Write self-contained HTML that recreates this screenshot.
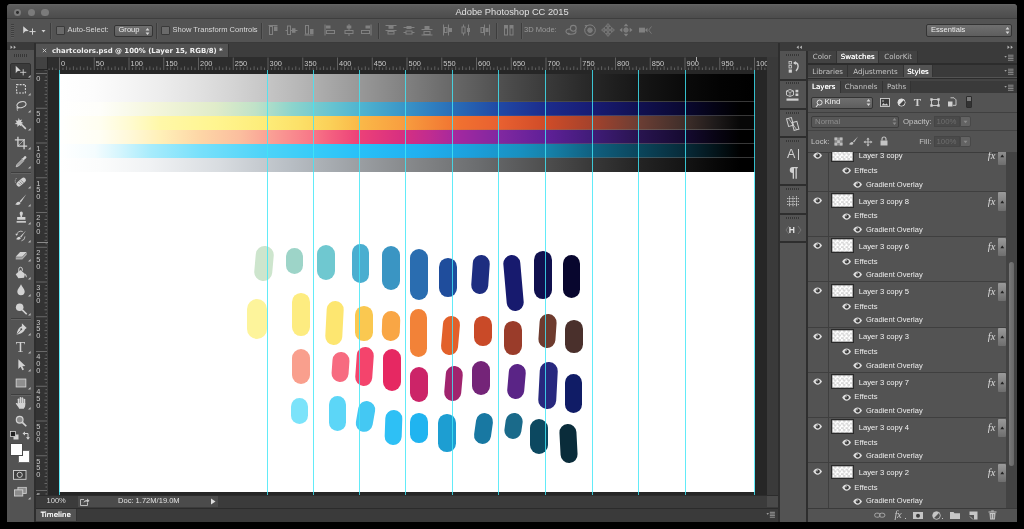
<!DOCTYPE html><html><head><meta charset="utf-8"><title>Adobe Photoshop CC 2015</title><style>
*{box-sizing:border-box;margin:0;padding:0}
html,body{width:1024px;height:529px;overflow:hidden;background:#000}
body{position:relative;filter:blur(.55px);font-family:"Liberation Sans",sans-serif;font-size:7.55px;color:#d8d8d8;line-height:1}
.a{position:absolute}
.t{position:absolute;white-space:nowrap;line-height:10px;height:10px}
.tab{position:absolute;font-family:"DejaVu Sans",sans-serif;font-size:7.1px;white-space:nowrap;text-align:center;color:#c4c4c4;background:#424242;line-height:11.5px;border-right:1px solid #333}
.tab.on{background:#535353;color:#fff;text-shadow:0 0 .5px #fff}
.sep{position:absolute;width:1px;background:#3d3d3d;box-shadow:1px 0 0 #5b5b5b}
.cb{position:absolute;width:9px;height:9px;background:#6a6a6a;border:1px solid #3a3a3a;border-radius:1px}
.dd{position:absolute;border:1px solid #343434;border-radius:2px;background:linear-gradient(#6f6f6f,#5e5e5e)}
.blob{position:absolute}
.rl{position:absolute;font-size:7.4px;color:#c9c9c9;line-height:8px;white-space:nowrap}
.vl{position:absolute;font-size:7.4px;color:#c9c9c9;line-height:6.75px;width:6px;text-align:center;word-break:break-all}
</style></head><body>
<div class="a" style="left:7.3px;top:4px;width:1009.5px;height:517.8px;background:#535353;border-radius:3.5px 3.5px 0 0"></div>
<div class="a" style="left:7.3px;top:4px;width:1009.5px;height:14.5px;background:linear-gradient(#666 0,#5c5c5c 12%,#4b4b4b 100%);border-radius:3.5px 3.5px 0 0"></div>
<div class="a" style="left:7.3px;top:18.4px;width:1009.5px;height:1px;background:#3e3e3e"></div>
<div class="a" style="left:13.65px;top:8.9px;width:7.2px;height:7.2px;border-radius:50%;background:#7b7b7b"></div>
<div class="a" style="left:27.65px;top:8.9px;width:7.2px;height:7.2px;border-radius:50%;background:#7b7b7b"></div>
<div class="a" style="left:41.4px;top:8.9px;width:7.2px;height:7.2px;border-radius:50%;background:#7b7b7b"></div>
<div class="a" style="left:15.85px;top:11.1px;width:2.8px;height:2.8px;border-radius:50%;background:#2c2c2c"></div>
<div class="t" style="left:412px;top:7px;width:200px;text-align:center;font-size:9.3px;color:#e0e0e0">Adobe Photoshop CC 2015</div>
<div class="a" style="left:7.3px;top:19.4px;width:1009.5px;height:22.6px;background:#535353"></div>
<div class="a" style="left:7.3px;top:42px;width:1009.5px;height:1px;background:#3a3a3a"></div>
<div class="a" style="left:11px;top:24px;width:2.5px;height:14px;background:repeating-linear-gradient(#3e3e3e 0 1px,#5c5c5c 1px 2px)"></div>
<svg class="a" style="left:22px;top:24px;" width="16" height="13" viewBox="0 0 16 13"><path d="M1.200 2.200v7.200l2-2.100 3.600-.3z" fill="#d4d4d4"/><path d="M10.500 4.500v6.200M7.400 7.600h6.200" stroke="#d4d4d4" stroke-width="1" fill="none"/></svg>
<svg class="a" style="left:41px;top:28.5px;" width="5" height="4" viewBox="0 0 5 4"><path d="M0.5 1h4l-2 2.4z" fill="#d0d0d0"/></svg>
<div class="sep" style="left:50px;top:23px;height:16px"></div>
<div class="cb" style="left:55.5px;top:26px"></div>
<div class="t" style="left:67.5px;top:25.1px;">Auto-Select:</div>
<div class="dd" style="left:114px;top:24.5px;width:38.5px;height:12.5px"></div>
<div class="t" style="left:118.5px;top:25.2px;color:#ececec">Group</div>
<svg class="a" style="left:144.5px;top:26.5px;" width="5" height="9" viewBox="0 0 5 9"><path d="M0.6 3.6h3.8l-1.9-2.6zM0.6 5.4h3.8l-1.9 2.6z" fill="#d8d8d8"/></svg>
<div class="sep" style="left:156px;top:23px;height:16px"></div>
<div class="cb" style="left:160.5px;top:26px"></div>
<div class="t" style="left:172.5px;top:25.1px;">Show Transform Controls</div>
<div class="sep" style="left:261px;top:23px;height:16px"></div>
<svg class="a" style="left:266.5px;top:22.9px;" width="14" height="14" viewBox="0 0 14 14"><path d="M1.5 2.5h9" stroke="#818181"/><rect x="2.5" y="3.5" width="3" height="8" fill="none" stroke="#818181"/><rect x="7" y="3.5" width="3.5" height="4.5" fill="#818181"/></svg>
<svg class="a" style="left:284.75px;top:22.9px;" width="14" height="14" viewBox="0 0 14 14"><path d="M0.5 7.5h12" stroke="#818181"/><rect x="2.5" y="3" width="3" height="8.5" fill="#535353" stroke="#818181"/><rect x="7" y="5.2" width="3.5" height="4.6" fill="#818181"/></svg>
<svg class="a" style="left:302.75px;top:22.9px;" width="14" height="14" viewBox="0 0 14 14"><path d="M1.5 12h9" stroke="#818181"/><rect x="2.5" y="2.5" width="3" height="8.5" fill="none" stroke="#818181"/><rect x="7" y="6" width="3.5" height="5" fill="#818181"/></svg>
<svg class="a" style="left:322.75px;top:22.9px;" width="14" height="14" viewBox="0 0 14 14"><path d="M2 1.5v11" stroke="#818181"/><rect x="3" y="2.5" width="4.5" height="3" fill="#818181"/><rect x="3.5" y="7.5" width="8" height="3" fill="none" stroke="#818181"/></svg>
<svg class="a" style="left:341.5px;top:22.9px;" width="14" height="14" viewBox="0 0 14 14"><path d="M7 1v12" stroke="#818181"/><rect x="4.7" y="2.5" width="4.6" height="3" fill="#818181"/><rect x="3" y="7.5" width="8" height="3" fill="#535353" stroke="#818181"/></svg>
<svg class="a" style="left:359px;top:22.9px;" width="14" height="14" viewBox="0 0 14 14"><path d="M12 1.5v11" stroke="#818181"/><rect x="6.5" y="2.5" width="4.5" height="3" fill="#818181"/><rect x="2.5" y="7.5" width="8" height="3" fill="none" stroke="#818181"/></svg>
<div class="sep" style="left:378px;top:23px;height:16px"></div>
<svg class="a" style="left:384px;top:22.9px;" width="14" height="14" viewBox="0 0 14 14"><path d="M1.5 2.5h11M1.5 7.5h11" stroke="#818181"/><rect x="4.5" y="3" width="5" height="2.8" fill="#818181"/><rect x="4" y="8.5" width="6" height="2.5" fill="none" stroke="#818181"/></svg>
<svg class="a" style="left:402px;top:22.9px;" width="14" height="14" viewBox="0 0 14 14"><path d="M1.5 4.5h11M1.5 9.5h11" stroke="#818181"/><rect x="4.5" y="3" width="5" height="3" fill="#818181"/><rect x="4" y="8" width="6" height="3" fill="#535353" stroke="#818181"/></svg>
<svg class="a" style="left:420.25px;top:22.9px;" width="14" height="14" viewBox="0 0 14 14"><path d="M1.5 6.5h11M1.5 12h11" stroke="#818181"/><rect x="4.5" y="3" width="5" height="3" fill="#818181"/><rect x="4" y="8.5" width="6" height="3" fill="none" stroke="#818181"/></svg>
<svg class="a" style="left:441px;top:22.9px;" width="14" height="14" viewBox="0 0 14 14"><path d="M2.5 1.5v11M7.5 1.5v11" stroke="#818181"/><rect x="3.5" y="4.5" width="2.5" height="5" fill="none" stroke="#818181"/><rect x="8" y="5" width="3" height="4" fill="#818181"/></svg>
<svg class="a" style="left:459px;top:22.9px;" width="14" height="14" viewBox="0 0 14 14"><path d="M4.5 1.5v11M9.5 1.5v11" stroke="#818181"/><rect x="3" y="4" width="3" height="6" fill="#535353" stroke="#818181"/><rect x="8" y="5" width="3" height="4" fill="#818181"/></svg>
<svg class="a" style="left:477.75px;top:22.9px;" width="14" height="14" viewBox="0 0 14 14"><path d="M6.5 1.5v11M11.5 1.5v11" stroke="#818181"/><rect x="3" y="4.5" width="2.5" height="5" fill="none" stroke="#818181"/><rect x="7.5" y="5" width="3" height="4" fill="#818181"/></svg>
<div class="sep" style="left:496px;top:23px;height:16px"></div>
<svg class="a" style="left:502px;top:22.9px;" width="14" height="14" viewBox="0 0 14 14"><rect x="2.5" y="2.5" width="3" height="9.5" fill="none" stroke="#818181"/><rect x="8" y="2.5" width="3" height="9.5" fill="none" stroke="#818181"/><rect x="2.5" y="2.5" width="3" height="3" fill="#818181"/><rect x="8" y="2.5" width="3" height="3" fill="#818181"/></svg>
<div class="sep" style="left:521px;top:23px;height:16px"></div>
<div class="t" style="left:524px;top:25.1px;color:#9a9a9a">3D Mode:</div>
<svg class="a" style="left:565px;top:22.9px;" width="14" height="14" viewBox="0 0 14 14"><ellipse cx="6" cy="8.500" rx="5" ry="2.700" fill="none" stroke="#818181" stroke-width="1.100"/><circle cx="8.300" cy="5.300" r="2.900" fill="#535353" stroke="#818181" stroke-width="1.100"/><path d="M3 9.500l2.500 1.500-2.500.8z" fill="#818181"/></svg>
<svg class="a" style="left:583px;top:22.9px;" width="14" height="14" viewBox="0 0 14 14"><circle cx="7" cy="7.200" r="5.300" fill="none" stroke="#818181" stroke-width="1"/><circle cx="7" cy="7.200" r="2.300" fill="#7a7a7a" stroke="#818181" stroke-width=".8"/><path d="M1.500 2l3 .3-1 2.400z" fill="#818181"/></svg>
<svg class="a" style="left:601px;top:22.9px;" width="14" height="14" viewBox="0 0 14 14"><path d="M7 .5L9.600 3.500H7.700V6.300H10.500V4.400L13.500 7L10.500 9.600V7.700H7.700V10.500H9.600L7 13.500L4.400 10.500H6.300V7.700H3.500V9.600L.5 7L3.500 4.400V6.300H6.300V3.500H4.400Z" fill="#666" stroke="#818181" stroke-width=".7" stroke-linejoin="miter"/></svg>
<svg class="a" style="left:619px;top:22.9px;" width="14" height="14" viewBox="0 0 14 14"><circle cx="7" cy="7" r="2.200" fill="#7a7a7a" stroke="#818181" stroke-width=".9"/><path d="M7 .5l2.300 2.800h-4.600zM7 13.500l2.300-2.800h-4.600zM.5 7l2.800-2.300v4.600zM13.500 7l-2.800-2.300v4.600z" fill="#818181"/></svg>
<svg class="a" style="left:637.5px;top:22.9px;" width="14" height="14" viewBox="0 0 14 14"><rect x="1" y="4.700" width="6" height="4.800" fill="#818181"/><path d="M7 7.100l2.500-2.300v4.600z" fill="#818181"/><path d="M13.500 3.500l-2.800 3.600 2.800 3.600" fill="none" stroke="#818181" stroke-width=".8"/></svg>
<div class="dd" style="left:926.25px;top:24.25px;width:85.5px;height:12.5px"></div>
<div class="t" style="left:931px;top:25.1px;color:#ececec">Essentials</div>
<svg class="a" style="left:1004.5px;top:26.3px;" width="5" height="9" viewBox="0 0 5 9"><path d="M0.6 3.6h3.8l-1.9-2.600zM0.6 5.400h3.800l-1.900 2.600z" fill="#d8d8d8"/></svg>
<div class="a" style="left:7.3px;top:43px;width:1009.5px;height:13.5px;background:#3c3c3c"></div>
<div class="a" style="left:7px;top:43px;width:772px;height:13.5px;background:#3d3d3d"></div>
<div class="a" style="left:36px;top:43.5px;width:192.5px;height:13px;background:#535353;border-right:1px solid #303030"></div>
<svg class="a" style="left:42.3px;top:48px;" width="5" height="5" viewBox="0 0 5 5"><path d="M.8.8l3.400 3.400M4.200.8l-3.400 3.400" stroke="#d0d0d0" stroke-width=".9"/></svg>
<div class="t" style="left:52px;top:45.9px;font-family:'DejaVu Sans',sans-serif;font-weight:bold;font-size:6.93px;color:#f0f0f0">chartcolors.psd @ 100% (Layer 15, RGB/8) *</div>
<div class="a" style="left:7.3px;top:43px;width:26.7px;height:478.8px;background:#535353"></div>
<div class="a" style="left:7.3px;top:43px;width:26.7px;height:7px;background:#3a3a3a"></div>
<div class="a" style="left:34px;top:43px;width:2px;height:478.8px;background:#2e2e2e"></div>
<svg class="a" style="left:10px;top:45px;" width="8" height="5" viewBox="0 0 8 5"><path d="M.5.5v3.600l2.200-1.800zM3.700.5v3.600l2.200-1.800z" fill="#b8b8b8"/></svg>
<div class="a" style="left:14px;top:54px;width:13px;height:2.5px;background:repeating-linear-gradient(90deg,#363636 0 1px,#565656 1px 2px)"></div>
<div class="a" style="left:10.3px;top:62.7px;width:20.7px;height:16px;background:#3b3b3b;border:1px solid #2f2f2f;border-radius:2px;box-shadow:0 1px 0 #666"></div>
<svg class="a" style="left:12.5px;top:62.5px;transform:scale(.88)" width="16" height="16" viewBox="0 0 16 16"><path d="M2 2v8.500l2.300-2.500 3.500-.2z" fill="#d2d2d2"/><path d="M10.500 6v7M7 9.500h7" stroke="#d2d2d2" fill="none"/></svg>
<svg class="a" style="left:28.3px;top:74.7px;" width="3" height="3" viewBox="0 0 3 3"><path d="M2.600 0v2.600h-2.600z" fill="#bdbdbd"/></svg>
<svg class="a" style="left:12.5px;top:80.75px;transform:scale(.88)" width="16" height="16" viewBox="0 0 16 16"><rect x="3" y="3" width="10" height="9.500" fill="none" stroke="#d2d2d2" stroke-width="1.200" stroke-dasharray="2.200 1.300"/></svg>
<svg class="a" style="left:28.3px;top:92.95px;" width="3" height="3" viewBox="0 0 3 3"><path d="M2.600 0v2.600h-2.600z" fill="#bdbdbd"/></svg>
<svg class="a" style="left:12.5px;top:98px;transform:scale(.88)" width="16" height="16" viewBox="0 0 16 16"><ellipse cx="8.500" cy="6.500" rx="5.300" ry="3.300" fill="none" stroke="#d2d2d2" stroke-width="1.200" transform="rotate(-15 8.500 6.500)"/><path d="M4.500 8.500c-1.500 1-1.200 2.500.3 2.200s.5-2-.6-1.300c-.8.600-.6 2.500-.2 4" fill="none" stroke="#d2d2d2" stroke-width=".9"/></svg>
<svg class="a" style="left:28.3px;top:110.2px;" width="3" height="3" viewBox="0 0 3 3"><path d="M2.600 0v2.600h-2.600z" fill="#bdbdbd"/></svg>
<svg class="a" style="left:12.5px;top:115.75px;transform:scale(.88)" width="16" height="16" viewBox="0 0 16 16"><path d="M7.500 7.500l6 6" stroke="#d2d2d2" stroke-width="1.800"/><path d="M5.500 1l1 2.800 2.800-1-1.300 2.700 2.700 1.300-2.800 1 .6 2.900-2.500-1.600-2 2.300-.2-3-3-.4 2.400-1.800-1.500-2.600 2.900.6z" fill="#d2d2d2"/></svg>
<svg class="a" style="left:28.3px;top:127.95px;" width="3" height="3" viewBox="0 0 3 3"><path d="M2.600 0v2.600h-2.600z" fill="#bdbdbd"/></svg>
<svg class="a" style="left:12.5px;top:134.5px;transform:scale(.88)" width="16" height="16" viewBox="0 0 16 16"><path d="M4.500 1v10.500h10.500M1 4.500h10.500v10.500" fill="none" stroke="#d2d2d2" stroke-width="1.500"/><path d="M4.500 11.500l8-8" stroke="#d2d2d2" stroke-width=".7"/></svg>
<svg class="a" style="left:28.3px;top:146.7px;" width="3" height="3" viewBox="0 0 3 3"><path d="M2.600 0v2.600h-2.600z" fill="#bdbdbd"/></svg>
<svg class="a" style="left:12.5px;top:153.5px;transform:scale(.88)" width="16" height="16" viewBox="0 0 16 16"><path d="M2.500 13.500l1-2.800 5.500-5.500 1.800 1.800-5.500 5.500z" fill="#9c9c9c" stroke="#d2d2d2" stroke-width=".9"/><path d="M8.500 4l1.500-.2 2-2.300c1.200-.8 2.800.8 2 2l-2.300 2-.2 1.500z" fill="#d2d2d2"/></svg>
<svg class="a" style="left:28.3px;top:165.7px;" width="3" height="3" viewBox="0 0 3 3"><path d="M2.600 0v2.600h-2.600z" fill="#bdbdbd"/></svg>
<div class="a" style="left:10.5px;top:171.5px;width:20px;height:1px;background:#3e3e3e;box-shadow:0 1px 0 #626262"></div>
<svg class="a" style="left:12.5px;top:174px;transform:scale(.88)" width="16" height="16" viewBox="0 0 16 16"><rect x="2" y="5.300" width="12.500" height="5.600" rx="2.800" fill="#d2d2d2" transform="rotate(-40 8.200 8.200)"/><path d="M3 3.500c-1.800 1.500-2 4-1 6" fill="none" stroke="#d2d2d2" stroke-width=".8" stroke-dasharray="1.200 1"/><path d="M6.500 7.500l3 3M8 6l3 3M5 9l3 3" stroke="#535353" stroke-width=".7"/></svg>
<svg class="a" style="left:28.3px;top:186.2px;" width="3" height="3" viewBox="0 0 3 3"><path d="M2.600 0v2.600h-2.600z" fill="#bdbdbd"/></svg>
<svg class="a" style="left:12.5px;top:192px;transform:scale(.88)" width="16" height="16" viewBox="0 0 16 16"><path d="M14 1.500l-7.500 8 1.200 1.200z" fill="#d2d2d2"/><path d="M6 10c-2.200-.4-3 1.300-4.500 3 2.200 1 5.500.8 6-1.500z" fill="#d2d2d2"/></svg>
<svg class="a" style="left:28.3px;top:204.2px;" width="3" height="3" viewBox="0 0 3 3"><path d="M2.600 0v2.600h-2.600z" fill="#bdbdbd"/></svg>
<svg class="a" style="left:12.5px;top:210px;transform:scale(.88)" width="16" height="16" viewBox="0 0 16 16"><path d="M6.500 2.500a1.800 1.800 0 0 1 3.600 0c0 1.600-1 2.400-1 4.500h3.900v3h-9.400v-3h3.900c0-2.100-1-2.900-1-4.500z" fill="#d2d2d2"/><rect x="3" y="11.500" width="10.600" height="1.800" fill="#d2d2d2"/></svg>
<svg class="a" style="left:28.3px;top:222.2px;" width="3" height="3" viewBox="0 0 3 3"><path d="M2.600 0v2.600h-2.600z" fill="#bdbdbd"/></svg>
<svg class="a" style="left:12.5px;top:227.75px;transform:scale(.88)" width="16" height="16" viewBox="0 0 16 16"><path d="M13.500 2l-6.500 6.500 1.200 1.200z" fill="#d2d2d2"/><path d="M6.500 9c-2-.3-2.700 1.200-4 2.700 2 .9 4.800.7 5.300-1.300z" fill="#d2d2d2"/><path d="M3 6.500a5 5 0 0 1 7-3.500M12.500 8.500a5 5 0 0 1-4 5" fill="none" stroke="#d2d2d2" stroke-width=".9"/><path d="M1.500 5.500l1.300 2.300 1.800-1.800z" fill="#d2d2d2"/></svg>
<svg class="a" style="left:28.3px;top:239.95px;" width="3" height="3" viewBox="0 0 3 3"><path d="M2.600 0v2.600h-2.600z" fill="#bdbdbd"/></svg>
<svg class="a" style="left:12.5px;top:246.5px;transform:scale(.88)" width="16" height="16" viewBox="0 0 16 16"><path d="M2 10l5-5.500h7.500l-5 5.500z" fill="#d2d2d2"/><path d="M2 10.600h7.500l5-5.500v2.600l-5 5.500h-7.500z" fill="#a8a8a8"/></svg>
<svg class="a" style="left:28.3px;top:258.7px;" width="3" height="3" viewBox="0 0 3 3"><path d="M2.600 0v2.600h-2.600z" fill="#bdbdbd"/></svg>
<svg class="a" style="left:12.5px;top:264.75px;transform:scale(.88)" width="16" height="16" viewBox="0 0 16 16"><path d="M2 9.500l5.500-5 5 4.500-1 4.500-6.500.5z" fill="#d2d2d2"/><path d="M5.500 7.500v-4a2 2 0 0 1 4 0v2" fill="none" stroke="#d2d2d2" stroke-width="1.100"/><path d="M12.500 8.500c1.500.8 2.200 2.500 2 4.500-1.200-.6-1.800-2.200-2-4.500z" fill="#d2d2d2"/></svg>
<svg class="a" style="left:28.3px;top:276.95px;" width="3" height="3" viewBox="0 0 3 3"><path d="M2.600 0v2.600h-2.600z" fill="#bdbdbd"/></svg>
<svg class="a" style="left:12.5px;top:282px;transform:scale(.88)" width="16" height="16" viewBox="0 0 16 16"><path d="M8 1.500c1.300 3 4.200 5.300 4.200 8.300a4.200 4.200 0 0 1-8.400 0c0-3 2.900-5.300 4.200-8.300z" fill="#d2d2d2"/></svg>
<svg class="a" style="left:28.3px;top:294.2px;" width="3" height="3" viewBox="0 0 3 3"><path d="M2.600 0v2.600h-2.600z" fill="#bdbdbd"/></svg>
<svg class="a" style="left:12.5px;top:300.5px;transform:scale(.88)" width="16" height="16" viewBox="0 0 16 16"><circle cx="6.500" cy="6" r="4.300" fill="#d2d2d2"/><path d="M9.500 9l5 5" stroke="#d2d2d2" stroke-width="1.800"/></svg>
<svg class="a" style="left:28.3px;top:312.7px;" width="3" height="3" viewBox="0 0 3 3"><path d="M2.600 0v2.600h-2.600z" fill="#bdbdbd"/></svg>
<div class="a" style="left:10.5px;top:317.5px;width:20px;height:1px;background:#3e3e3e;box-shadow:0 1px 0 #626262"></div>
<svg class="a" style="left:12.5px;top:320.5px;transform:scale(.88)" width="16" height="16" viewBox="0 0 16 16"><path d="M9 1.500l5.500 5.500-2 1.200c-1 3-3.500 5-9.500 6.300.8-5.500 2.800-8.500 6-9.500z" fill="#d2d2d2"/><circle cx="8.300" cy="8.300" r="1.100" fill="#535353"/><path d="M3 14.500l5-5.500" stroke="#535353" stroke-width=".8"/></svg>
<svg class="a" style="left:28.3px;top:332.7px;" width="3" height="3" viewBox="0 0 3 3"><path d="M2.600 0v2.600h-2.600z" fill="#bdbdbd"/></svg>
<div class="t" style="left:13.500px;top:339px;width:14px;height:16px;line-height:16px;text-align:center;font-family:'Liberation Serif',serif;font-size:15.500px;color:#d2d2d2">T</div>
<svg class="a" style="left:28.3px;top:350.7px;" width="3" height="3" viewBox="0 0 3 3"><path d="M2.600 0v2.600h-2.600z" fill="#bdbdbd"/></svg>
<svg class="a" style="left:12.5px;top:356.75px;transform:scale(.88)" width="16" height="16" viewBox="0 0 16 16"><path d="M5 1.500v11l2.600-2.400 1.900 4 1.900-.9-1.900-3.900 3.500-.3z" fill="#d2d2d2"/></svg>
<svg class="a" style="left:28.3px;top:368.95px;" width="3" height="3" viewBox="0 0 3 3"><path d="M2.600 0v2.600h-2.600z" fill="#bdbdbd"/></svg>
<svg class="a" style="left:12.5px;top:374.75px;transform:scale(.88)" width="16" height="16" viewBox="0 0 16 16"><rect x="2.500" y="3.500" width="11" height="9" fill="#8e8e8e" stroke="#d2d2d2" stroke-width="1"/></svg>
<svg class="a" style="left:28.3px;top:386.95px;" width="3" height="3" viewBox="0 0 3 3"><path d="M2.600 0v2.600h-2.600z" fill="#bdbdbd"/></svg>
<div class="a" style="left:10.5px;top:393.5px;width:20px;height:1px;background:#3e3e3e;box-shadow:0 1px 0 #626262"></div>
<svg class="a" style="left:12.5px;top:395px;transform:scale(.88)" width="16" height="16" viewBox="0 0 16 16"><g fill="#d2d2d2"><rect x="4.300" y="2.800" width="1.900" height="7" rx=".95"/><rect x="6.500" y="1.200" width="1.900" height="8" rx=".95"/><rect x="8.700" y="1.600" width="1.900" height="8" rx=".95"/><rect x="10.900" y="3.200" width="1.900" height="7" rx=".95"/><path d="M4.300 8h8.500v2.500c0 2-1 3-1.700 4h-5.300c-.6-1.700-1.800-3-3.800-5.800.8-1 1.800-.6 2.300.3z"/></g></svg>
<svg class="a" style="left:28.3px;top:407.2px;" width="3" height="3" viewBox="0 0 3 3"><path d="M2.600 0v2.600h-2.600z" fill="#bdbdbd"/></svg>
<svg class="a" style="left:12.5px;top:412.75px;transform:scale(.88)" width="16" height="16" viewBox="0 0 16 16"><circle cx="6.500" cy="6.500" r="3.800" fill="#8a8a8a" stroke="#d2d2d2" stroke-width="1.400"/><path d="M9.500 9.500l4.500 4.500" stroke="#d2d2d2" stroke-width="1.900"/></svg>
<svg class="a" style="left:10px;top:431px;" width="9" height="9" viewBox="0 0 9 9"><rect x="3.500" y="3.500" width="5" height="5" fill="#d2d2d2"/><rect x=".5" y=".5" width="5" height="5" fill="#222" stroke="#d2d2d2" stroke-width=".8"/></svg>
<svg class="a" style="left:22px;top:430.5px;" width="9" height="9" viewBox="0 0 9 9"><path d="M2.500 2.500h3.500v5" fill="none" stroke="#d2d2d2" stroke-width="1"/><path d="M.5 2.500l2.500-2v4zM6 8.800l-2-2.500h4z" fill="#d2d2d2"/></svg>
<div class="a" style="left:17.5px;top:450px;width:12.5px;height:12.5px;background:#fff;border:1px solid #6a6a6a"></div>
<div class="a" style="left:10px;top:443.25px;width:13.25px;height:12.5px;background:#fff;border:1px solid #4a4a4a"></div>
<svg class="a" style="left:12.8px;top:469.5px;transform:scale(.93);transform-origin:0 0" width="15" height="11" viewBox="0 0 15 11"><rect x=".5" y=".5" width="13.500" height="9.500" fill="#3f3f3f" stroke="#d2d2d2" stroke-width="1"/><circle cx="7.200" cy="5.200" r="2.800" fill="none" stroke="#d2d2d2" stroke-width="1"/></svg>
<svg class="a" style="left:12.5px;top:486.3px;transform:scale(.88)" width="16" height="13" viewBox="0 0 16 13"><rect x="4.500" y=".5" width="9.500" height="7" fill="#8c8c8c" stroke="#d2d2d2" stroke-width="1"/><rect x=".5" y="3.500" width="9.500" height="7" fill="#8c8c8c" stroke="#d2d2d2" stroke-width="1"/></svg>
<svg class="a" style="left:28.3px;top:496.5px;" width="3" height="3" viewBox="0 0 3 3"><path d="M2.600 0v2.600h-2.600z" fill="#bdbdbd"/></svg>
<div class="a" style="left:36px;top:56.5px;width:731px;height:438px;background:#262626"></div>
<div class="a" style="left:36px;top:56.5px;width:731px;height:13.5px;background:#2d2d2d"></div>
<div class="a" style="left:36px;top:56.5px;width:11.5px;height:13.5px;background:#424242;border-right:1px solid #242424;border-bottom:1px solid #242424"></div>
<div class="a" style="left:36px;top:70px;width:11.5px;height:424.5px;background:#333"></div>
<svg class="a" style="left:0px;top:56.5px;" width="767" height="13.5" viewBox="0 0 767 13.5"><path d="M59.50 .5v13 M62.98 10.600v2.700 M66.45 9.3v4 M69.92 10.600v2.700 M73.40 9.3v4 M76.88 10.600v2.700 M80.35 9.3v4 M83.83 10.600v2.700 M87.30 9.3v4 M90.78 10.600v2.700 M94.25 .5v13 M97.72 10.600v2.700 M101.20 9.3v4 M104.67 10.600v2.700 M108.15 9.3v4 M111.62 10.600v2.700 M115.10 9.3v4 M118.57 10.600v2.700 M122.05 9.3v4 M125.52 10.600v2.700 M129.00 .5v13 M132.47 10.600v2.700 M135.95 9.3v4 M139.43 10.600v2.700 M142.90 9.3v4 M146.38 10.600v2.700 M149.85 9.3v4 M153.32 10.600v2.700 M156.80 9.3v4 M160.27 10.600v2.700 M163.75 .5v13 M167.22 10.600v2.700 M170.70 9.3v4 M174.18 10.600v2.700 M177.65 9.3v4 M181.12 10.600v2.700 M184.60 9.3v4 M188.07 10.600v2.700 M191.55 9.3v4 M195.02 10.600v2.700 M198.50 .5v13 M201.97 10.600v2.700 M205.45 9.3v4 M208.92 10.600v2.700 M212.40 9.3v4 M215.88 10.600v2.700 M219.35 9.3v4 M222.82 10.600v2.700 M226.30 9.3v4 M229.77 10.600v2.700 M233.25 .5v13 M236.72 10.600v2.700 M240.20 9.3v4 M243.67 10.600v2.700 M247.15 9.3v4 M250.62 10.600v2.700 M254.10 9.3v4 M257.57 10.600v2.700 M261.05 9.3v4 M264.52 10.600v2.700 M268.00 .5v13 M271.48 10.600v2.700 M274.95 9.3v4 M278.42 10.600v2.700 M281.90 9.3v4 M285.38 10.600v2.700 M288.85 9.3v4 M292.32 10.600v2.700 M295.80 9.3v4 M299.27 10.600v2.700 M302.75 .5v13 M306.23 10.600v2.700 M309.70 9.3v4 M313.17 10.600v2.700 M316.65 9.3v4 M320.12 10.600v2.700 M323.60 9.3v4 M327.07 10.600v2.700 M330.55 9.3v4 M334.02 10.600v2.700 M337.50 .5v13 M340.97 10.600v2.700 M344.45 9.3v4 M347.92 10.600v2.700 M351.40 9.3v4 M354.88 10.600v2.700 M358.35 9.3v4 M361.82 10.600v2.700 M365.30 9.3v4 M368.77 10.600v2.700 M372.25 .5v13 M375.72 10.600v2.700 M379.20 9.3v4 M382.67 10.600v2.700 M386.15 9.3v4 M389.62 10.600v2.700 M393.10 9.3v4 M396.57 10.600v2.700 M400.05 9.3v4 M403.52 10.600v2.700 M407.00 .5v13 M410.47 10.600v2.700 M413.95 9.3v4 M417.42 10.600v2.700 M420.90 9.3v4 M424.38 10.600v2.700 M427.85 9.3v4 M431.32 10.600v2.700 M434.80 9.3v4 M438.27 10.600v2.700 M441.75 .5v13 M445.22 10.600v2.700 M448.70 9.3v4 M452.17 10.600v2.700 M455.65 9.3v4 M459.12 10.600v2.700 M462.60 9.3v4 M466.07 10.600v2.700 M469.55 9.3v4 M473.02 10.600v2.700 M476.50 .5v13 M479.97 10.600v2.700 M483.45 9.3v4 M486.92 10.600v2.700 M490.40 9.3v4 M493.87 10.600v2.700 M497.35 9.3v4 M500.82 10.600v2.700 M504.30 9.3v4 M507.77 10.600v2.700 M511.25 .5v13 M514.72 10.600v2.700 M518.20 9.3v4 M521.67 10.600v2.700 M525.15 9.3v4 M528.62 10.600v2.700 M532.10 9.3v4 M535.58 10.600v2.700 M539.05 9.3v4 M542.52 10.600v2.700 M546.00 .5v13 M549.47 10.600v2.700 M552.95 9.3v4 M556.42 10.600v2.700 M559.90 9.3v4 M563.38 10.600v2.700 M566.85 9.3v4 M570.33 10.600v2.700 M573.80 9.3v4 M577.27 10.600v2.700 M580.75 .5v13 M584.22 10.600v2.700 M587.70 9.3v4 M591.17 10.600v2.700 M594.65 9.3v4 M598.12 10.600v2.700 M601.60 9.3v4 M605.07 10.600v2.700 M608.55 9.3v4 M612.02 10.600v2.700 M615.50 .5v13 M618.97 10.600v2.700 M622.45 9.3v4 M625.92 10.600v2.700 M629.40 9.3v4 M632.88 10.600v2.700 M636.35 9.3v4 M639.82 10.600v2.700 M643.30 9.3v4 M646.77 10.600v2.700 M650.25 .5v13 M653.72 10.600v2.700 M657.20 9.3v4 M660.67 10.600v2.700 M664.15 9.3v4 M667.62 10.600v2.700 M671.10 9.3v4 M674.57 10.600v2.700 M678.05 9.3v4 M681.52 10.600v2.700 M685.00 .5v13 M688.47 10.600v2.700 M691.95 9.3v4 M695.42 10.600v2.700 M698.90 9.3v4 M702.38 10.600v2.700 M705.85 9.3v4 M709.32 10.600v2.700 M712.80 9.3v4 M716.27 10.600v2.700 M719.75 .5v13 M723.22 10.600v2.700 M726.70 9.3v4 M730.17 10.600v2.700 M733.65 9.3v4 M737.12 10.600v2.700 M740.60 9.3v4 M744.07 10.600v2.700 M747.55 9.3v4 M751.02 10.600v2.700 M754.50 .5v13 M757.97 10.600v2.700 M761.45 9.3v4 M764.92 10.600v2.700 M56.02 11.5v3 M52.55 10.5v3 M49.08 11.5v3" stroke="#808080" stroke-width=".62" fill="none"/></svg>
<div class="rl" style="left:61.10px;top:60px">0</div>
<div class="rl" style="left:95.85px;top:60px">50</div>
<div class="rl" style="left:130.60px;top:60px">100</div>
<div class="rl" style="left:165.35px;top:60px">150</div>
<div class="rl" style="left:200.10px;top:60px">200</div>
<div class="rl" style="left:234.85px;top:60px">250</div>
<div class="rl" style="left:269.60px;top:60px">300</div>
<div class="rl" style="left:304.35px;top:60px">350</div>
<div class="rl" style="left:339.10px;top:60px">400</div>
<div class="rl" style="left:373.85px;top:60px">450</div>
<div class="rl" style="left:408.60px;top:60px">500</div>
<div class="rl" style="left:443.35px;top:60px">550</div>
<div class="rl" style="left:478.10px;top:60px">600</div>
<div class="rl" style="left:512.85px;top:60px">650</div>
<div class="rl" style="left:547.60px;top:60px">700</div>
<div class="rl" style="left:582.35px;top:60px">750</div>
<div class="rl" style="left:617.10px;top:60px">800</div>
<div class="rl" style="left:651.85px;top:60px">850</div>
<div class="rl" style="left:686.60px;top:60px">900</div>
<div class="rl" style="left:721.35px;top:60px">950</div>
<div class="rl" style="left:756.10px;top:60px">1000</div>
<div class="a" style="left:767px;top:56.5px;width:11px;height:438px;background:#3a3a3a"></div>
<svg class="a" style="left:36px;top:70px;" width="11.5" height="424.5" viewBox="0 0 11.5 424.5"><path d="M0 3.50h11.5 M9.500 6.97h2 M8.500 10.45h3 M9.500 13.92h2 M8.500 17.40h3 M9.500 20.88h2 M8.500 24.35h3 M9.500 27.83h2 M8.500 31.30h3 M9.500 34.78h2 M0 38.25h11.5 M9.500 41.72h2 M8.500 45.20h3 M9.500 48.67h2 M8.500 52.15h3 M9.500 55.62h2 M8.500 59.10h3 M9.500 62.57h2 M8.500 66.05h3 M9.500 69.52h2 M0 73.00h11.5 M9.500 76.47h2 M8.500 79.95h3 M9.500 83.43h2 M8.500 86.90h3 M9.500 90.38h2 M8.500 93.85h3 M9.500 97.32h2 M8.500 100.80h3 M9.500 104.27h2 M0 107.75h11.5 M9.500 111.22h2 M8.500 114.70h3 M9.500 118.18h2 M8.500 121.65h3 M9.500 125.12h2 M8.500 128.60h3 M9.500 132.07h2 M8.500 135.55h3 M9.500 139.02h2 M0 142.50h11.5 M9.500 145.97h2 M8.500 149.45h3 M9.500 152.92h2 M8.500 156.40h3 M9.500 159.88h2 M8.500 163.35h3 M9.500 166.82h2 M8.500 170.30h3 M9.500 173.77h2 M0 177.25h11.5 M9.500 180.72h2 M8.500 184.20h3 M9.500 187.67h2 M8.500 191.15h3 M9.500 194.62h2 M8.500 198.10h3 M9.500 201.57h2 M8.500 205.05h3 M9.500 208.52h2 M0 212.00h11.5 M9.500 215.48h2 M8.500 218.95h3 M9.500 222.42h2 M8.500 225.90h3 M9.500 229.38h2 M8.500 232.85h3 M9.500 236.32h2 M8.500 239.80h3 M9.500 243.27h2 M0 246.75h11.5 M9.500 250.23h2 M8.500 253.70h3 M9.500 257.17h2 M8.500 260.65h3 M9.500 264.12h2 M8.500 267.60h3 M9.500 271.07h2 M8.500 274.55h3 M9.500 278.02h2 M0 281.50h11.5 M9.500 284.97h2 M8.500 288.45h3 M9.500 291.92h2 M8.500 295.40h3 M9.500 298.88h2 M8.500 302.35h3 M9.500 305.82h2 M8.500 309.30h3 M9.500 312.77h2 M0 316.25h11.5 M9.500 319.72h2 M8.500 323.20h3 M9.500 326.67h2 M8.500 330.15h3 M9.500 333.62h2 M8.500 337.10h3 M9.500 340.57h2 M8.500 344.05h3 M9.500 347.52h2 M0 351.00h11.5 M9.500 354.47h2 M8.500 357.95h3 M9.500 361.42h2 M8.500 364.90h3 M9.500 368.38h2 M8.500 371.85h3 M9.500 375.32h2 M8.500 378.80h3 M9.500 382.27h2 M0 385.75h11.5 M9.500 389.22h2 M8.500 392.70h3 M9.500 396.17h2 M8.500 399.65h3 M9.500 403.12h2 M8.500 406.60h3 M9.500 410.07h2 M8.500 413.55h3 M9.500 417.02h2 M0 420.50h11.5 M9.500 423.97h2 M8.500 0.03h3" stroke="#8f8f8f" stroke-width=".6" fill="none"/></svg>
<div class="vl" style="left:35.2px;top:76.40px;height:9.75px;overflow:hidden">0</div>
<div class="vl" style="left:35.2px;top:111.15px;height:16.50px;overflow:hidden">50</div>
<div class="vl" style="left:35.2px;top:145.90px;height:23.25px;overflow:hidden">100</div>
<div class="vl" style="left:35.2px;top:180.65px;height:23.25px;overflow:hidden">150</div>
<div class="vl" style="left:35.2px;top:215.40px;height:23.25px;overflow:hidden">200</div>
<div class="vl" style="left:35.2px;top:250.15px;height:23.25px;overflow:hidden">250</div>
<div class="vl" style="left:35.2px;top:284.90px;height:23.25px;overflow:hidden">300</div>
<div class="vl" style="left:35.2px;top:319.65px;height:23.25px;overflow:hidden">350</div>
<div class="vl" style="left:35.2px;top:354.40px;height:23.25px;overflow:hidden">400</div>
<div class="vl" style="left:35.2px;top:389.15px;height:23.25px;overflow:hidden">450</div>
<div class="vl" style="left:35.2px;top:423.90px;height:23.25px;overflow:hidden">500</div>
<div class="vl" style="left:35.2px;top:458.65px;height:23.25px;overflow:hidden">550</div>
<div class="vl" style="left:35.2px;top:493.40px;height:3.00px;overflow:hidden">600</div>
<div class="a" style="left:696px;top:57px;width:1px;height:3.5px;background:#b0b0b0"></div>
<div class="a" style="left:47px;top:70px;width:0.8px;height:424.5px;background:#3e3e3e"></div>
<div class="a" style="left:36.5px;top:241.5px;width:11px;height:1px;background:#8a8a8a"></div>
<div class="a" style="left:59px;top:73.5px;width:695.5px;height:418.5px;background:#fff;overflow:hidden">
<div class="a" style="left:0;top:0px;width:695.5px;height:28px;background:linear-gradient(90deg,#ffffff 0.00%,#fcfcfc 5.00%,#f5f5f5 10.00%,#ececec 15.00%,#e1e1e1 20.00%,#d4d4d4 25.00%,#c5c5c5 30.00%,#b5b5b5 35.00%,#a3a3a3 40.00%,#929292 45.00%,#808080 50.00%,#6d6d6d 55.00%,#5c5c5c 60.00%,#4a4a4a 65.00%,#3a3a3a 70.00%,#2b2b2b 75.00%,#1e1e1e 80.00%,#131313 85.00%,#0a0a0a 90.00%,#030303 95.00%,#000000 100.00%)"></div>
<div class="a" style="left:0;top:28px;width:695.5px;height:14px;background:linear-gradient(90deg,#fff 0.00%,#fefefa 5.90%,#f4f6dc 13.80%,#e0ecca 22.43%,#c0e2c8 28.18%,#8cd4cc 33.50%,#68c4d0 38.96%,#50b4d0 43.28%,#3c98c8 49.03%,#3080c0 53.34%,#2868b4 57.66%,#2048a4 63.41%,#1c2c8c 69.88%,#181c74 76.64%,#111152 83.25%,#0a0830 90.01%,#040314 94.32%,#000 97.92%)"></div>
<div class="a" style="left:0;top:42px;width:695.5px;height:14px;background:linear-gradient(90deg,#fff 0.00%,#fffef0 5.90%,#fffbd0 10.21%,#fff8a8 14.52%,#fff590 22.43%,#fdec78 29.91%,#fce068 34.65%,#fbd058 38.96%,#fab848 43.28%,#f8a040 49.03%,#f48838 53.34%,#f07030 57.66%,#e86030 63.41%,#d04c28 69.88%,#a4422c 76.64%,#6c3e34 83.25%,#3e2e2a 90.01%,#1e1a1a 94.32%,#070707 97.92%)"></div>
<div class="a" style="left:0;top:56px;width:695.5px;height:14px;background:linear-gradient(90deg,#fff 0.00%,#fffef4 5.90%,#fff8d8 10.21%,#fff0b8 14.52%,#fdd6a6 20.27%,#fbbe9e 26.02%,#f99692 31.78%,#f87888 36.23%,#f46080 38.96%,#ec4078 43.28%,#d83080 49.03%,#c02c90 53.34%,#a028a0 57.66%,#8028a0 63.41%,#602098 69.88%,#401c78 76.64%,#291450 83.25%,#150a30 90.01%,#080414 94.32%,#000 97.92%)"></div>
<div class="a" style="left:0;top:70px;width:695.5px;height:14px;background:linear-gradient(90deg,#fff 0.00%,#f4fcfe 5.18%,#d4f5fd 8.77%,#a8ecfc 13.08%,#78e0fb 20.27%,#50d4f8 28.90%,#38ccf8 36.23%,#28c0f8 43.28%,#20b0f0 51.91%,#1ca0dc 59.09%,#1890c0 66.28%,#1680a8 70.60%,#106080 76.64%,#0b465c 83.25%,#072a38 90.01%,#03141a 94.32%,#000 97.92%)"></div>
<div class="a" style="left:0;top:84px;width:695.5px;height:14px;background:linear-gradient(90deg,#fff 0.00%,#fbfcfc 5.90%,#f0f2f4 13.08%,#d8dce0 23.15%,#b8bec4 33.21%,#9a9ea2 43.28%,#828486 51.91%,#6a6c6e 60.53%,#4c4c4c 70.60%,#383838 76.64%,#242424 83.25%,#141414 90.01%,#080808 94.32%,#000 97.92%)"></div>
<div class="a" style="left:0;top:27.5px;width:695.5px;height:1px;background:linear-gradient(90deg,rgba(110,110,110,0) 50%,rgba(110,110,110,.5) 80%)"></div>
<div class="a" style="left:0;top:41.5px;width:695.5px;height:1px;background:linear-gradient(90deg,rgba(110,110,110,0) 50%,rgba(110,110,110,.5) 80%)"></div>
<div class="a" style="left:0;top:55.5px;width:695.5px;height:1px;background:linear-gradient(90deg,rgba(110,110,110,0) 50%,rgba(110,110,110,.5) 80%)"></div>
<div class="a" style="left:0;top:69.5px;width:695.5px;height:1px;background:linear-gradient(90deg,rgba(110,110,110,0) 50%,rgba(110,110,110,.5) 80%)"></div>
<div class="a" style="left:0;top:83.5px;width:695.5px;height:1px;background:linear-gradient(90deg,rgba(110,110,110,0) 50%,rgba(110,110,110,.5) 80%)"></div>
<div class="blob" style="left:195.52px;top:172.47px;width:17.72px;height:35.07px;border-radius:8.86px;background:#cde5cd;transform:rotate(5deg)"></div>
<div class="blob" style="left:226.75px;top:174.00px;width:17.50px;height:26.25px;border-radius:8.75px;background:#9dd4c8;"></div>
<div class="blob" style="left:258.00px;top:171.50px;width:18.00px;height:35.00px;border-radius:9.00px;background:#6fc8d0;"></div>
<div class="blob" style="left:292.75px;top:170.25px;width:17.50px;height:39.25px;border-radius:8.75px;background:#4aaed0;"></div>
<div class="blob" style="left:322.50px;top:172.00px;width:18.00px;height:44.00px;border-radius:9.00px;background:#3a95c3;"></div>
<div class="blob" style="left:350.50px;top:175.75px;width:18.00px;height:50.75px;border-radius:9.00px;background:#2a6db0;"></div>
<div class="blob" style="left:380.25px;top:184.00px;width:17.75px;height:39.50px;border-radius:8.88px;background:#1f4d9c;"></div>
<div class="blob" style="left:413.00px;top:181.97px;width:17.25px;height:39.05px;border-radius:8.62px;background:#1d2d80;transform:rotate(4deg)"></div>
<div class="blob" style="left:445.66px;top:181.43px;width:17.43px;height:55.65px;border-radius:8.71px;background:#171a6e;transform:rotate(-5deg)"></div>
<div class="blob" style="left:475.25px;top:177.75px;width:17.75px;height:47.50px;border-radius:8.88px;background:#10104e;"></div>
<div class="blob" style="left:503.50px;top:181.50px;width:17.50px;height:43.00px;border-radius:8.75px;background:#08062e;"></div>
<div class="blob" style="left:187.75px;top:225.25px;width:20.25px;height:40.00px;border-radius:10.12px;background:#fdf49b;"></div>
<div class="blob" style="left:232.75px;top:219.50px;width:17.75px;height:43.25px;border-radius:8.88px;background:#fdec80;"></div>
<div class="blob" style="left:267.43px;top:227.23px;width:17.39px;height:43.54px;border-radius:8.69px;background:#fde670;transform:rotate(3deg)"></div>
<div class="blob" style="left:296.00px;top:232.25px;width:17.50px;height:34.75px;border-radius:8.75px;background:#fac850;"></div>
<div class="blob" style="left:322.97px;top:237.00px;width:17.81px;height:30.01px;border-radius:8.91px;background:#f9a645;transform:rotate(2deg)"></div>
<div class="blob" style="left:350.50px;top:235.50px;width:17.50px;height:47.75px;border-radius:8.75px;background:#f28238;"></div>
<div class="blob" style="left:383.18px;top:242.21px;width:16.89px;height:38.83px;border-radius:8.45px;background:#e2602a;transform:rotate(5deg)"></div>
<div class="blob" style="left:415.25px;top:242.75px;width:17.50px;height:30.00px;border-radius:8.75px;background:#c94a28;"></div>
<div class="blob" style="left:445.00px;top:247.00px;width:17.75px;height:34.00px;border-radius:8.88px;background:#9a3c2a;"></div>
<div class="blob" style="left:480.34px;top:240.23px;width:16.83px;height:34.29px;border-radius:8.41px;background:#6e3b2e;transform:rotate(4deg)"></div>
<div class="blob" style="left:506.00px;top:246.00px;width:17.50px;height:33.50px;border-radius:8.75px;background:#4a302c;"></div>
<div class="blob" style="left:233.00px;top:275.75px;width:18.00px;height:35.00px;border-radius:9.00px;background:#f99f8d;"></div>
<div class="blob" style="left:272.70px;top:278.23px;width:17.36px;height:30.28px;border-radius:8.68px;background:#f76b80;transform:rotate(4deg)"></div>
<div class="blob" style="left:297.26px;top:273.97px;width:17.23px;height:39.30px;border-radius:8.61px;background:#f4446c;transform:rotate(4deg)"></div>
<div class="blob" style="left:324.25px;top:275.75px;width:18.00px;height:42.00px;border-radius:9.00px;background:#e62862;"></div>
<div class="blob" style="left:350.50px;top:293.25px;width:18.00px;height:35.00px;border-radius:9.00px;background:#cc2468;"></div>
<div class="blob" style="left:386.25px;top:292.22px;width:17.24px;height:34.82px;border-radius:8.62px;background:#a0246e;transform:rotate(5deg)"></div>
<div class="blob" style="left:413.00px;top:287.00px;width:18.00px;height:34.50px;border-radius:9.00px;background:#742478;"></div>
<div class="blob" style="left:448.75px;top:290.97px;width:17.24px;height:34.82px;border-radius:8.62px;background:#5a2486;transform:rotate(5deg)"></div>
<div class="blob" style="left:480.02px;top:288.23px;width:17.70px;height:47.04px;border-radius:8.85px;background:#28287e;transform:rotate(3deg)"></div>
<div class="blob" style="left:505.50px;top:300.25px;width:17.50px;height:38.75px;border-radius:8.75px;background:#101c66;"></div>
<div class="blob" style="left:232.25px;top:324.50px;width:17.00px;height:25.75px;border-radius:8.50px;background:#7be3fa;"></div>
<div class="blob" style="left:269.75px;top:322.75px;width:17.50px;height:34.25px;border-radius:8.75px;background:#5cd6f7;"></div>
<div class="blob" style="left:297.90px;top:327.65px;width:17.46px;height:30.70px;border-radius:8.73px;background:#44c8f3;transform:rotate(10deg)"></div>
<div class="blob" style="left:326.30px;top:336.49px;width:17.41px;height:34.51px;border-radius:8.70px;background:#2ec0f5;transform:rotate(2deg)"></div>
<div class="blob" style="left:351.00px;top:339.50px;width:17.50px;height:30.00px;border-radius:8.75px;background:#20b4f0;"></div>
<div class="blob" style="left:379.25px;top:340.75px;width:17.50px;height:37.75px;border-radius:8.75px;background:#1d9ed2;"></div>
<div class="blob" style="left:416.20px;top:339.68px;width:17.10px;height:31.14px;border-radius:8.55px;background:#1878a2;transform:rotate(8deg)"></div>
<div class="blob" style="left:446.11px;top:339.46px;width:17.27px;height:26.34px;border-radius:8.64px;background:#1a6a8a;transform:rotate(8deg)"></div>
<div class="blob" style="left:470.50px;top:345.75px;width:18.00px;height:34.50px;border-radius:9.00px;background:#0c4860;"></div>
<div class="blob" style="left:501.06px;top:350.24px;width:17.39px;height:38.78px;border-radius:8.69px;background:#0a2c3a;transform:rotate(-3deg)"></div>
</div>
<div class="a" style="left:266.83px;top:70px;width:0.84px;height:424.5px;background:rgba(64,230,246,.82)"></div>
<div class="a" style="left:312.83px;top:70px;width:0.84px;height:424.5px;background:rgba(64,230,246,.82)"></div>
<div class="a" style="left:358.83px;top:70px;width:0.84px;height:424.5px;background:rgba(64,230,246,.82)"></div>
<div class="a" style="left:405.08px;top:70px;width:0.84px;height:424.5px;background:rgba(64,230,246,.82)"></div>
<div class="a" style="left:451.58px;top:70px;width:0.84px;height:424.5px;background:rgba(64,230,246,.82)"></div>
<div class="a" style="left:498.08px;top:70px;width:0.84px;height:424.5px;background:rgba(64,230,246,.82)"></div>
<div class="a" style="left:544.83px;top:70px;width:0.84px;height:424.5px;background:rgba(64,230,246,.82)"></div>
<div class="a" style="left:591.58px;top:70px;width:0.84px;height:424.5px;background:rgba(64,230,246,.82)"></div>
<div class="a" style="left:638.08px;top:70px;width:0.84px;height:424.5px;background:rgba(64,230,246,.82)"></div>
<div class="a" style="left:684.83px;top:70px;width:0.84px;height:424.5px;background:rgba(64,230,246,.82)"></div>
<div class="a" style="left:58.6px;top:70px;width:1px;height:424.5px;background:rgba(64,230,246,.82)"></div>
<div class="a" style="left:754.3px;top:70px;width:1px;height:424.5px;background:rgba(64,230,246,.82)"></div>
<div class="a" style="left:36px;top:494.5px;width:742px;height:13px;background:#3b3b3b"></div>
<div class="a" style="left:36px;top:494.5px;width:742px;height:1px;background:#2c2c2c"></div>
<div class="t" style="left:46.5px;top:496.2px;color:#dcdcdc">100%</div>
<div class="a" style="left:77.5px;top:495.5px;width:140px;height:11.5px;background:#4b4b4b"></div>
<svg class="a" style="left:79.5px;top:496.5px;" width="10" height="9" viewBox="0 0 10 9"><path d="M.5 2.500h3.500M.5 2.500v6h7v-2.500" fill="none" stroke="#c8c8c8" stroke-width=".9"/><path d="M3.500 6c.3-2 1.500-3 3.500-3v-1.500l2.500 2.300-2.500 2.300v-1.500c-1.500 0-2.500.4-3.500 1.400z" fill="#c8c8c8"/></svg>
<div class="t" style="left:118px;top:496.2px;color:#e2e2e2">Doc: 1.72M/19.0M</div>
<svg class="a" style="left:210px;top:497.8px;" width="6" height="7" viewBox="0 0 6 7"><path d="M1 .5v6l4.500-3z" fill="#dcdcdc"/></svg>
<div class="a" style="left:767px;top:495.5px;width:11px;height:11.5px;background:#4a4a4a"></div>
<div class="a" style="left:36px;top:507.5px;width:742px;height:14.3px;background:#3a3a3a;border-top:1px solid #2b2b2b"></div>
<div class="tab on" style="left:36px;top:508.5px;width:40.5px;height:12.5px;line-height:12px">Timeline</div>
<svg class="a" style="left:765.5px;top:511.3px;transform:scale(.85);transform-origin:0 0" width="11" height="8" viewBox="0 0 11 8"><path d="M.5 2.500h3l-1.500 2z" fill="#b5b5b5"/><path d="M4.500 1.500h6M4.500 3.500h6M4.500 5.500h6M4.500 7.500h6" stroke="#b5b5b5" stroke-width=".9"/></svg>
<div class="a" style="left:778px;top:43px;width:2px;height:478.8px;background:#2e2e2e"></div>
<div class="a" style="left:780px;top:43px;width:237px;height:7.5px;background:#3a3a3a"></div>
<svg class="a" style="left:796px;top:45px;" width="8" height="5" viewBox="0 0 8 5"><path d="M2.700.5v3.600l-2.200-1.800zM5.900.5v3.600l-2.200-1.800z" fill="#b8b8b8"/></svg>
<svg class="a" style="left:1006.5px;top:45px;" width="8" height="5" viewBox="0 0 8 5"><path d="M.5.5v3.600l2.200-1.800zM3.700.5v3.600l2.200-1.800z" fill="#b8b8b8"/></svg>
<div class="a" style="left:780px;top:50.5px;width:26px;height:471.3px;background:#535353"></div>
<div class="a" style="left:806px;top:50.5px;width:2px;height:471.3px;background:#2e2e2e"></div>
<div class="a" style="left:786px;top:53.7px;width:14px;height:2.2px;background:repeating-linear-gradient(90deg,#363636 0 1px,#565656 1px 2px)"></div>
<div class="a" style="left:780px;top:78.5px;width:26px;height:2px;background:#2e2e2e"></div>
<div class="a" style="left:786px;top:82px;width:14px;height:2.2px;background:repeating-linear-gradient(90deg,#363636 0 1px,#565656 1px 2px)"></div>
<div class="a" style="left:780px;top:108.3px;width:26px;height:2px;background:#2e2e2e"></div>
<div class="a" style="left:786px;top:111.5px;width:14px;height:2.2px;background:repeating-linear-gradient(90deg,#363636 0 1px,#565656 1px 2px)"></div>
<div class="a" style="left:780px;top:136.3px;width:26px;height:2px;background:#2e2e2e"></div>
<div class="a" style="left:786px;top:140px;width:14px;height:2.2px;background:repeating-linear-gradient(90deg,#363636 0 1px,#565656 1px 2px)"></div>
<div class="a" style="left:780px;top:184px;width:26px;height:2px;background:#2e2e2e"></div>
<div class="a" style="left:786px;top:187.5px;width:14px;height:2.2px;background:repeating-linear-gradient(90deg,#363636 0 1px,#565656 1px 2px)"></div>
<div class="a" style="left:780px;top:212.5px;width:26px;height:2px;background:#2e2e2e"></div>
<div class="a" style="left:786px;top:216.5px;width:14px;height:2.2px;background:repeating-linear-gradient(90deg,#363636 0 1px,#565656 1px 2px)"></div>
<div class="a" style="left:780px;top:240.5px;width:26px;height:2px;background:#2e2e2e"></div>
<svg class="a" style="left:785px;top:60px;" width="16" height="15" viewBox="0 0 16 15"><rect x="4" y="1.500" width="2.500" height="2.500" fill="none" stroke="#d0d0d0" stroke-width=".8"/><rect x="4" y="5.500" width="2.500" height="2.500" fill="none" stroke="#d0d0d0" stroke-width=".8"/><rect x="3.700" y="9.500" width="3.200" height="3.200" fill="#d0d0d0"/><path d="M9.500 3h2c2 1 2.500 5 -.5 8" fill="none" stroke="#d0d0d0" stroke-width="1.400"/><path d="M8 3l2.800-2v4z" fill="#d0d0d0"/></svg>
<svg class="a" style="left:785px;top:88px;" width="16" height="15" viewBox="0 0 16 15"><path d="M5 1.500l3.500 1.500v4l-3.500 1.500-3.500-1.500v-4z" fill="none" stroke="#d0d0d0" stroke-width=".9"/><path d="M1.500 3l3.500 1.500 3.500-1.500M5 4.500v4" fill="none" stroke="#d0d0d0" stroke-width=".7"/><rect x="10.500" y="1.800" width="2.800" height="2.500" fill="#d0d0d0"/><rect x="10.500" y="5.500" width="2.800" height="2.500" fill="#d0d0d0"/><rect x="1.500" y="10.500" width="12" height="2.200" fill="#d0d0d0"/></svg>
<svg class="a" style="left:785px;top:116px;" width="16" height="16" viewBox="0 0 16 16"><rect x="2.500" y="2" width="5" height="8" fill="none" stroke="#d0d0d0" stroke-width="1" transform="rotate(-15 5 6)"/><rect x="8" y="6" width="5" height="8" fill="none" stroke="#d0d0d0" stroke-width="1" transform="rotate(-15 10 10)"/><path d="M3 2l9 12" stroke="#d0d0d0" stroke-width=".8"/></svg>
<div class="t" style="left:787px;top:147px;height:14px;line-height:14px;font-size:12.500px;color:#d0d0d0">A</div>
<div class="a" style="left:797.7px;top:148.5px;width:1px;height:11.5px;background:#d0d0d0"></div>
<svg class="a" style="left:787px;top:165.5px;" width="12" height="14" viewBox="0 0 12 14"><path d="M5.800 1h5v1.200h-1v10.500h-1.300v-10.500h-1.500v10.500h-1.300v-5.700a3 3 0 0 1 .1-6z" fill="#d0d0d0"/></svg>
<svg class="a" style="left:786px;top:195px;" width="14" height="13" viewBox="0 0 14 13"><path d="M1 3.500h12M1 6.500h12M1 9.500h12M3.500 1v11M7 1v11M10.500 1v11" stroke="#d0d0d0" stroke-width=".8" stroke-dasharray="1.500 .7"/></svg>
<svg class="a" style="left:784.5px;top:224px;" width="17" height="12" viewBox="0 0 17 12"><path d="M4 2l-3 4 3 4M13 2l3 4-3 4" fill="none" stroke="#7c7c7c" stroke-width=".8"/></svg>
<div class="t" style="left:788.800px;top:225px;font-weight:bold;font-size:8.500px;color:#e4e4e4">H</div>
<div class="a" style="left:808px;top:50.5px;width:208.8px;height:471.3px;background:#535353"></div>
<div class="a" style="left:808px;top:51px;width:209px;height:12.3px;background:#3a3a3a"></div>
<div class="tab" style="left:808px;top:51px;width:29px;height:12.3px;line-height:12.9px">Color</div>
<div class="tab on" style="left:837px;top:51px;width:42.299999999999955px;height:12.3px;line-height:12.9px">Swatches</div>
<div class="tab" style="left:879.3px;top:51px;width:38.700000000000045px;height:12.3px;line-height:12.9px">ColorKit</div>
<svg class="a" style="left:1004px;top:54.2px;" width="10" height="7" viewBox="0 0 10 7"><path d="M.3 2h2.600l-1.300 1.800z" fill="#a0a0a0"/><path d="M4 1.200h5.500M4 2.900h5.500M4 4.600h5.500M4 6.300h5.500" stroke="#a0a0a0" stroke-width=".8"/></svg>
<div class="a" style="left:808px;top:63.3px;width:209px;height:1.4px;background:#2c2c2c"></div>
<div class="a" style="left:808px;top:64.7px;width:209px;height:12.8px;background:#3a3a3a"></div>
<div class="tab" style="left:808px;top:64.7px;width:40.299999999999955px;height:12.8px;line-height:13.4px">Libraries</div>
<div class="tab" style="left:848.3px;top:64.7px;width:55.40000000000009px;height:12.8px;line-height:13.4px">Adjustments</div>
<div class="tab on" style="left:903.7px;top:64.7px;width:29.59999999999991px;height:12.8px;line-height:13.4px">Styles</div>
<svg class="a" style="left:1004px;top:67.9px;" width="10" height="7" viewBox="0 0 10 7"><path d="M.3 2h2.600l-1.300 1.800z" fill="#a0a0a0"/><path d="M4 1.200h5.500M4 2.900h5.500M4 4.600h5.500M4 6.300h5.500" stroke="#a0a0a0" stroke-width=".8"/></svg>
<div class="a" style="left:808px;top:77.5px;width:209px;height:1.5px;background:#2c2c2c"></div>
<div class="a" style="left:808px;top:79px;width:209px;height:1.6px;background:#444"></div>
<div class="a" style="left:808px;top:80.6px;width:209px;height:12px;background:#3a3a3a"></div>
<div class="tab on" style="left:808px;top:80.6px;width:32.5px;height:12px;line-height:12.6px">Layers</div>
<div class="tab" style="left:840.5px;top:80.6px;width:42.200000000000045px;height:12px;line-height:12.6px">Channels</div>
<div class="tab" style="left:882.7px;top:80.6px;width:28.799999999999955px;height:12px;line-height:12.6px">Paths</div>
<svg class="a" style="left:1004px;top:83.8px;" width="10" height="7" viewBox="0 0 10 7"><path d="M.3 2h2.600l-1.300 1.800z" fill="#a0a0a0"/><path d="M4 1.200h5.500M4 2.900h5.500M4 4.600h5.500M4 6.300h5.500" stroke="#a0a0a0" stroke-width=".8"/></svg>
<div class="dd" style="left:810.500px;top:96.500px;width:62.500px;height:12px"></div>
<svg class="a" style="left:814.5px;top:98.5px;" width="8" height="9" viewBox="0 0 8 9"><circle cx="4.600" cy="3.500" r="2.500" fill="none" stroke="#e0e0e0" stroke-width="1"/><path d="M3 5.500l-2 2.500" stroke="#e0e0e0" stroke-width="1.100"/></svg>
<div class="t" style="left:824.5px;top:97.3px;color:#f0f0f0;font-size:8px">Kind</div>
<svg class="a" style="left:865.5px;top:98px;" width="5" height="9" viewBox="0 0 5 9"><path d="M.6 3.600h3.800l-1.900-2.600zM.6 5.400h3.800l-1.900 2.600z" fill="#d8d8d8"/></svg>
<svg class="a" style="left:880px;top:97.5px;" width="10" height="9" viewBox="0 0 10 9"><rect x=".5" y=".5" width="9" height="8" fill="#3c3c3c" stroke="#d0d0d0" stroke-width=".9"/><path d="M1.500 7.500l2-2.500 1.500 1.500 1.500-1 2 2z" fill="#d0d0d0"/><circle cx="3" cy="3" r=".8" fill="#d0d0d0"/></svg>
<svg class="a" style="left:896.5px;top:97.5px;" width="9" height="9" viewBox="0 0 9 9"><circle cx="4.500" cy="4.500" r="3.600" fill="#e0e0e0" stroke="#e0e0e0" stroke-width=".9"/><path d="M2.300 6.700a3.100 3.100 0 0 0 4.400-4.400z" fill="#444"/></svg>
<div class="t" style="left:912.500px;top:96px;width:10px;height:12px;line-height:12px;text-align:center;font-family:'Liberation Serif',serif;font-weight:bold;font-size:11px;color:#d0d0d0">T</div>
<svg class="a" style="left:930px;top:97.5px;" width="10" height="9" viewBox="0 0 10 9"><rect x="1.500" y="1.500" width="7" height="6" fill="none" stroke="#d0d0d0" stroke-width=".9"/><path d="M.3.300h2.400v2.400h-2.400zM7.300.3h2.400v2.400h-2.400zM.3 6.300h2.400v2.400h-2.400zM7.300 6.300h2.400v2.400h-2.400z" fill="#d0d0d0"/></svg>
<svg class="a" style="left:947px;top:97px;" width="10" height="10" viewBox="0 0 10 10"><path d="M1 4.500h4.500v5h-4.500z" fill="#d0d0d0"/><path d="M3.500 .8h3.500l2 2v5.500h-3" fill="none" stroke="#d0d0d0" stroke-width=".9"/></svg>
<div class="a" style="left:965.7px;top:96.3px;width:6px;height:11.7px;background:linear-gradient(#7a7a7a 0 42%,#333 42% 100%);border:1px solid #2c2c2c;border-radius:1px"></div>
<div class="a" style="left:808px;top:112px;width:209px;height:1px;background:#404040"></div>
<div class="dd" style="left:810.500px;top:115.500px;width:88.500px;height:12px;background:#575757;border-color:#3d3d3d"></div>
<div class="t" style="left:815px;top:116.5px;color:#8e8e8e;font-size:7.800px">Normal</div>
<svg class="a" style="left:892px;top:117px;" width="5" height="9" viewBox="0 0 5 9"><path d="M.6 3.600h3.800l-1.900-2.600zM.6 5.400h3.800l-1.900 2.600z" fill="#8a8a8a"/></svg>
<div class="t" style="left:903px;top:116.5px;color:#c4c4c4;font-size:7.800px">Opacity:</div>
<div class="a" style="left:933.7px;top:115.7px;width:26px;height:11.8px;background:#4a4a4a;border:1px solid #454545"></div>
<div class="t" style="left:936.5px;top:116.7px;color:#6e6e6e;font-size:7.800px">100%</div>
<div class="a" style="left:959.5px;top:115.7px;width:11.8px;height:11.8px;background:#636363;border:1px solid #484848;border-radius:0 2px 2px 0"></div>
<svg class="a" style="left:963px;top:120px;" width="5" height="4" viewBox="0 0 5 4"><path d="M.5.800h4l-2 2.400z" fill="#8a8a8a"/></svg>
<div class="a" style="left:808px;top:130px;width:209px;height:1px;background:#434343"></div>
<div class="t" style="left:811px;top:136.5px;color:#c4c4c4;font-size:7.800px">Lock:</div>
<svg class="a" style="left:833.5px;top:137px;" width="9" height="9" viewBox="0 0 9 9"><rect x=".5" y=".5" width="8" height="8" fill="#888" /><path d="M.5.500h2.700v2.700h-2.700zM5.800.5h2.700v2.700h-2.700zM3.200 3.200h2.700v2.700h-2.700zM.5 5.800h2.700v2.700h-2.700zM5.800 5.800h2.700v2.700h-2.700z" fill="#bcbcbc"/></svg>
<svg class="a" style="left:848px;top:136px;" width="11" height="10" viewBox="0 0 11 10"><path d="M10 .5l-5 5 1 1z" fill="#c4c4c4"/><path d="M4.500 6c-1.700-.3-2.300 1-3.500 2.300 1.700.8 4 .6 4.400-1.100z" fill="#c4c4c4"/></svg>
<svg class="a" style="left:863px;top:136.5px;" width="10" height="10" viewBox="0 0 10 10"><path d="M5 .5l1.600 2h-1.100v2h2v-1.100l2 1.600-2 1.600v-1.100h-2v2h1.100l-1.600 2-1.600-2h1.100v-2h-2v1.100l-2-1.600 2-1.600v1.100h2v-2h-1.100z" fill="#c4c4c4"/></svg>
<svg class="a" style="left:879.5px;top:136px;" width="8" height="10" viewBox="0 0 8 10"><rect x=".5" y="4.500" width="7" height="5" fill="#c4c4c4"/><path d="M2 4.500v-1.500a2 2 0 0 1 4 0v1.500" fill="none" stroke="#c4c4c4" stroke-width="1.100"/></svg>
<div class="t" style="left:919.3px;top:136.5px;color:#c4c4c4;font-size:7.800px">Fill:</div>
<div class="a" style="left:933.7px;top:135.7px;width:26px;height:11.8px;background:#4a4a4a;border:1px solid #454545"></div>
<div class="t" style="left:936.5px;top:136.7px;color:#6e6e6e;font-size:7.800px">100%</div>
<div class="a" style="left:959.5px;top:135.7px;width:11.8px;height:11.8px;background:#636363;border:1px solid #484848;border-radius:0 2px 2px 0"></div>
<svg class="a" style="left:963px;top:140px;" width="5" height="4" viewBox="0 0 5 4"><path d="M.5.800h4l-2 2.400z" fill="#8a8a8a"/></svg>
<div class="a" style="left:808px;top:151.5px;width:209px;height:356.0px;overflow:hidden;background:#535353">
<div class="a" style="left:0px;top:0px;width:209px;height:1px;background:#3c3c3c"></div>
<div class="a" style="left:20px;top:0px;width:1px;height:356.0px;background:#3f3f3f"></div>
<svg class="a" style="left:5.3px;top:0.04999999999999982px;" width="9.2" height="7.2" viewBox="0 0 9.2 7.2"><path d="M.2 3.600c1.800-4.200 7-4.200 8.800 0-1.800 4.200-7 4.200-8.800 0z" fill="#dedede"/><circle cx="4.800" cy="3.500" r="2" fill="#3a3a3a"/><circle cx="4" cy="2.700" r=".7" fill="#dedede"/></svg>
<div class="a" style="left:23.3px;top:-3.5500000000000007px;width:22.7px;height:14.5px;background:#fff repeating-conic-gradient(#d9d9d9 0 25%,#fff 0 50%) 0 0/4.500px 4.500px;border:1px solid #2a2a2a;box-shadow:0 0 0 .5px #777 inset"></div>
<div class="t" style="left:50.8px;top:-0.25px;color:#f2f2f2;font-size:7.650px">Layer 3 copy</div>
<div class="t" style="left:179.8px;top:-0.25px;font-family:'Liberation Serif',serif;font-style:italic;font-size:10.500px;color:#dcdcdc;letter-spacing:0">fx</div>
<div class="a" style="left:190px;top:-4.449999999999999px;width:7.8px;height:18.4px;background:linear-gradient(#9a9a9a,#6e6e6e);border-radius:1px"></div>
<svg class="a" style="left:191.7px;top:2.75px;" width="4.5" height="4" viewBox="0 0 4.5 4"><path d="M.3 3.200h3.900l-1.950-2.700z" fill="#222"/></svg>
<svg class="a" style="left:33.8px;top:15.95px;" width="9.2" height="7.2" viewBox="0 0 9.2 7.2"><path d="M.2 3.600c1.800-4.200 7-4.200 8.800 0-1.800 4.200-7 4.200-8.800 0z" fill="#dedede"/><circle cx="4.800" cy="3.500" r="2" fill="#3a3a3a"/><circle cx="4" cy="2.700" r=".7" fill="#dedede"/></svg>
<div class="t" style="left:46.3px;top:14.649999999999999px;color:#ececec;font-size:7.650px">Effects</div>
<svg class="a" style="left:45.4px;top:29.35px;" width="9.2" height="7.2" viewBox="0 0 9.2 7.2"><path d="M.2 3.600c1.800-4.200 7-4.200 8.800 0-1.800 4.200-7 4.200-8.800 0z" fill="#dedede"/><circle cx="4.800" cy="3.500" r="2" fill="#3a3a3a"/><circle cx="4" cy="2.700" r=".7" fill="#dedede"/></svg>
<div class="t" style="left:58px;top:28.049999999999997px;color:#ececec;font-size:7.500px">Gradient Overlay</div>
<div class="a" style="left:0px;top:39.3px;width:201px;height:1px;background:#3f3f3f"></div>
<svg class="a" style="left:5.3px;top:45.3px;" width="9.2" height="7.2" viewBox="0 0 9.2 7.2"><path d="M.2 3.600c1.800-4.200 7-4.200 8.800 0-1.800 4.200-7 4.200-8.800 0z" fill="#dedede"/><circle cx="4.800" cy="3.500" r="2" fill="#3a3a3a"/><circle cx="4" cy="2.700" r=".7" fill="#dedede"/></svg>
<div class="a" style="left:23.3px;top:41.7px;width:22.7px;height:14.5px;background:#fff repeating-conic-gradient(#d9d9d9 0 25%,#fff 0 50%) 0 0/4.500px 4.500px;border:1px solid #2a2a2a;box-shadow:0 0 0 .5px #777 inset"></div>
<div class="t" style="left:50.8px;top:45.0px;color:#f2f2f2;font-size:7.650px">Layer 3 copy 8</div>
<div class="t" style="left:179.8px;top:45.0px;font-family:'Liberation Serif',serif;font-style:italic;font-size:10.500px;color:#dcdcdc;letter-spacing:0">fx</div>
<div class="a" style="left:190px;top:40.8px;width:7.8px;height:18.4px;background:linear-gradient(#9a9a9a,#6e6e6e);border-radius:1px"></div>
<svg class="a" style="left:191.7px;top:48.0px;" width="4.5" height="4" viewBox="0 0 4.5 4"><path d="M.3 3.200h3.900l-1.950-2.700z" fill="#222"/></svg>
<svg class="a" style="left:33.8px;top:61.2px;" width="9.2" height="7.2" viewBox="0 0 9.2 7.2"><path d="M.2 3.600c1.800-4.200 7-4.200 8.800 0-1.800 4.200-7 4.200-8.800 0z" fill="#dedede"/><circle cx="4.800" cy="3.500" r="2" fill="#3a3a3a"/><circle cx="4" cy="2.700" r=".7" fill="#dedede"/></svg>
<div class="t" style="left:46.3px;top:59.900000000000006px;color:#ececec;font-size:7.650px">Effects</div>
<svg class="a" style="left:45.4px;top:74.6px;" width="9.2" height="7.2" viewBox="0 0 9.2 7.2"><path d="M.2 3.600c1.800-4.200 7-4.200 8.800 0-1.800 4.200-7 4.200-8.800 0z" fill="#dedede"/><circle cx="4.800" cy="3.500" r="2" fill="#3a3a3a"/><circle cx="4" cy="2.700" r=".7" fill="#dedede"/></svg>
<div class="t" style="left:58px;top:73.3px;color:#ececec;font-size:7.500px">Gradient Overlay</div>
<div class="a" style="left:0px;top:84.55px;width:201px;height:1px;background:#3f3f3f"></div>
<svg class="a" style="left:5.3px;top:90.55px;" width="9.2" height="7.2" viewBox="0 0 9.2 7.2"><path d="M.2 3.600c1.800-4.200 7-4.200 8.800 0-1.800 4.200-7 4.200-8.800 0z" fill="#dedede"/><circle cx="4.800" cy="3.500" r="2" fill="#3a3a3a"/><circle cx="4" cy="2.700" r=".7" fill="#dedede"/></svg>
<div class="a" style="left:23.3px;top:86.95px;width:22.7px;height:14.5px;background:#fff repeating-conic-gradient(#d9d9d9 0 25%,#fff 0 50%) 0 0/4.500px 4.500px;border:1px solid #2a2a2a;box-shadow:0 0 0 .5px #777 inset"></div>
<div class="t" style="left:50.8px;top:90.25px;color:#f2f2f2;font-size:7.650px">Layer 3 copy 6</div>
<div class="t" style="left:179.8px;top:90.25px;font-family:'Liberation Serif',serif;font-style:italic;font-size:10.500px;color:#dcdcdc;letter-spacing:0">fx</div>
<div class="a" style="left:190px;top:86.05px;width:7.8px;height:18.4px;background:linear-gradient(#9a9a9a,#6e6e6e);border-radius:1px"></div>
<svg class="a" style="left:191.7px;top:93.25px;" width="4.5" height="4" viewBox="0 0 4.5 4"><path d="M.3 3.200h3.900l-1.950-2.700z" fill="#222"/></svg>
<svg class="a" style="left:33.8px;top:106.45px;" width="9.2" height="7.2" viewBox="0 0 9.2 7.2"><path d="M.2 3.600c1.800-4.200 7-4.200 8.800 0-1.800 4.200-7 4.200-8.800 0z" fill="#dedede"/><circle cx="4.800" cy="3.500" r="2" fill="#3a3a3a"/><circle cx="4" cy="2.700" r=".7" fill="#dedede"/></svg>
<div class="t" style="left:46.3px;top:105.15px;color:#ececec;font-size:7.650px">Effects</div>
<svg class="a" style="left:45.4px;top:119.85px;" width="9.2" height="7.2" viewBox="0 0 9.2 7.2"><path d="M.2 3.600c1.800-4.200 7-4.200 8.800 0-1.800 4.200-7 4.200-8.800 0z" fill="#dedede"/><circle cx="4.800" cy="3.500" r="2" fill="#3a3a3a"/><circle cx="4" cy="2.700" r=".7" fill="#dedede"/></svg>
<div class="t" style="left:58px;top:118.55px;color:#ececec;font-size:7.500px">Gradient Overlay</div>
<div class="a" style="left:0px;top:129.8px;width:201px;height:1px;background:#3f3f3f"></div>
<svg class="a" style="left:5.3px;top:135.8px;" width="9.2" height="7.2" viewBox="0 0 9.2 7.2"><path d="M.2 3.600c1.800-4.200 7-4.200 8.800 0-1.800 4.200-7 4.200-8.800 0z" fill="#dedede"/><circle cx="4.800" cy="3.500" r="2" fill="#3a3a3a"/><circle cx="4" cy="2.700" r=".7" fill="#dedede"/></svg>
<div class="a" style="left:23.3px;top:132.2px;width:22.7px;height:14.5px;background:#fff repeating-conic-gradient(#d9d9d9 0 25%,#fff 0 50%) 0 0/4.500px 4.500px;border:1px solid #2a2a2a;box-shadow:0 0 0 .5px #777 inset"></div>
<div class="t" style="left:50.8px;top:135.5px;color:#f2f2f2;font-size:7.650px">Layer 3 copy 5</div>
<div class="t" style="left:179.8px;top:135.5px;font-family:'Liberation Serif',serif;font-style:italic;font-size:10.500px;color:#dcdcdc;letter-spacing:0">fx</div>
<div class="a" style="left:190px;top:131.3px;width:7.8px;height:18.4px;background:linear-gradient(#9a9a9a,#6e6e6e);border-radius:1px"></div>
<svg class="a" style="left:191.7px;top:138.5px;" width="4.5" height="4" viewBox="0 0 4.5 4"><path d="M.3 3.200h3.900l-1.950-2.700z" fill="#222"/></svg>
<svg class="a" style="left:33.8px;top:151.7px;" width="9.2" height="7.2" viewBox="0 0 9.2 7.2"><path d="M.2 3.600c1.800-4.200 7-4.200 8.800 0-1.800 4.200-7 4.200-8.800 0z" fill="#dedede"/><circle cx="4.800" cy="3.500" r="2" fill="#3a3a3a"/><circle cx="4" cy="2.700" r=".7" fill="#dedede"/></svg>
<div class="t" style="left:46.3px;top:150.4px;color:#ececec;font-size:7.650px">Effects</div>
<svg class="a" style="left:45.4px;top:165.1px;" width="9.2" height="7.2" viewBox="0 0 9.2 7.2"><path d="M.2 3.600c1.800-4.200 7-4.200 8.800 0-1.800 4.200-7 4.200-8.800 0z" fill="#dedede"/><circle cx="4.800" cy="3.500" r="2" fill="#3a3a3a"/><circle cx="4" cy="2.700" r=".7" fill="#dedede"/></svg>
<div class="t" style="left:58px;top:163.8px;color:#ececec;font-size:7.500px">Gradient Overlay</div>
<div class="a" style="left:0px;top:175.05px;width:201px;height:1px;background:#3f3f3f"></div>
<svg class="a" style="left:5.3px;top:181.05px;" width="9.2" height="7.2" viewBox="0 0 9.2 7.2"><path d="M.2 3.600c1.800-4.200 7-4.200 8.800 0-1.800 4.200-7 4.200-8.800 0z" fill="#dedede"/><circle cx="4.800" cy="3.500" r="2" fill="#3a3a3a"/><circle cx="4" cy="2.700" r=".7" fill="#dedede"/></svg>
<div class="a" style="left:23.3px;top:177.45px;width:22.7px;height:14.5px;background:#fff repeating-conic-gradient(#d9d9d9 0 25%,#fff 0 50%) 0 0/4.500px 4.500px;border:1px solid #2a2a2a;box-shadow:0 0 0 .5px #777 inset"></div>
<div class="t" style="left:50.8px;top:180.75px;color:#f2f2f2;font-size:7.650px">Layer 3 copy 3</div>
<div class="t" style="left:179.8px;top:180.75px;font-family:'Liberation Serif',serif;font-style:italic;font-size:10.500px;color:#dcdcdc;letter-spacing:0">fx</div>
<div class="a" style="left:190px;top:176.55px;width:7.8px;height:18.4px;background:linear-gradient(#9a9a9a,#6e6e6e);border-radius:1px"></div>
<svg class="a" style="left:191.7px;top:183.75px;" width="4.5" height="4" viewBox="0 0 4.5 4"><path d="M.3 3.200h3.900l-1.950-2.700z" fill="#222"/></svg>
<svg class="a" style="left:33.8px;top:196.95px;" width="9.2" height="7.2" viewBox="0 0 9.2 7.2"><path d="M.2 3.600c1.800-4.200 7-4.200 8.800 0-1.800 4.200-7 4.200-8.800 0z" fill="#dedede"/><circle cx="4.800" cy="3.500" r="2" fill="#3a3a3a"/><circle cx="4" cy="2.700" r=".7" fill="#dedede"/></svg>
<div class="t" style="left:46.3px;top:195.65px;color:#ececec;font-size:7.650px">Effects</div>
<svg class="a" style="left:45.4px;top:210.35px;" width="9.2" height="7.2" viewBox="0 0 9.2 7.2"><path d="M.2 3.600c1.800-4.200 7-4.200 8.800 0-1.800 4.200-7 4.200-8.800 0z" fill="#dedede"/><circle cx="4.800" cy="3.500" r="2" fill="#3a3a3a"/><circle cx="4" cy="2.700" r=".7" fill="#dedede"/></svg>
<div class="t" style="left:58px;top:209.05px;color:#ececec;font-size:7.500px">Gradient Overlay</div>
<div class="a" style="left:0px;top:220.3px;width:201px;height:1px;background:#3f3f3f"></div>
<svg class="a" style="left:5.3px;top:226.3px;" width="9.2" height="7.2" viewBox="0 0 9.2 7.2"><path d="M.2 3.600c1.800-4.200 7-4.200 8.800 0-1.800 4.200-7 4.200-8.800 0z" fill="#dedede"/><circle cx="4.800" cy="3.500" r="2" fill="#3a3a3a"/><circle cx="4" cy="2.700" r=".7" fill="#dedede"/></svg>
<div class="a" style="left:23.3px;top:222.7px;width:22.7px;height:14.5px;background:#fff repeating-conic-gradient(#d9d9d9 0 25%,#fff 0 50%) 0 0/4.500px 4.500px;border:1px solid #2a2a2a;box-shadow:0 0 0 .5px #777 inset"></div>
<div class="t" style="left:50.8px;top:226.0px;color:#f2f2f2;font-size:7.650px">Layer 3 copy 7</div>
<div class="t" style="left:179.8px;top:226.0px;font-family:'Liberation Serif',serif;font-style:italic;font-size:10.500px;color:#dcdcdc;letter-spacing:0">fx</div>
<div class="a" style="left:190px;top:221.8px;width:7.8px;height:18.4px;background:linear-gradient(#9a9a9a,#6e6e6e);border-radius:1px"></div>
<svg class="a" style="left:191.7px;top:229.0px;" width="4.5" height="4" viewBox="0 0 4.5 4"><path d="M.3 3.200h3.900l-1.950-2.700z" fill="#222"/></svg>
<svg class="a" style="left:33.8px;top:242.2px;" width="9.2" height="7.2" viewBox="0 0 9.2 7.2"><path d="M.2 3.600c1.800-4.200 7-4.200 8.800 0-1.800 4.200-7 4.200-8.800 0z" fill="#dedede"/><circle cx="4.800" cy="3.500" r="2" fill="#3a3a3a"/><circle cx="4" cy="2.700" r=".7" fill="#dedede"/></svg>
<div class="t" style="left:46.3px;top:240.9px;color:#ececec;font-size:7.650px">Effects</div>
<svg class="a" style="left:45.4px;top:255.6px;" width="9.2" height="7.2" viewBox="0 0 9.2 7.2"><path d="M.2 3.600c1.800-4.200 7-4.200 8.800 0-1.800 4.200-7 4.200-8.800 0z" fill="#dedede"/><circle cx="4.800" cy="3.500" r="2" fill="#3a3a3a"/><circle cx="4" cy="2.700" r=".7" fill="#dedede"/></svg>
<div class="t" style="left:58px;top:254.3px;color:#ececec;font-size:7.500px">Gradient Overlay</div>
<div class="a" style="left:0px;top:265.55px;width:201px;height:1px;background:#3f3f3f"></div>
<svg class="a" style="left:5.3px;top:271.55px;" width="9.2" height="7.2" viewBox="0 0 9.2 7.2"><path d="M.2 3.600c1.800-4.200 7-4.200 8.800 0-1.800 4.200-7 4.200-8.800 0z" fill="#dedede"/><circle cx="4.800" cy="3.500" r="2" fill="#3a3a3a"/><circle cx="4" cy="2.700" r=".7" fill="#dedede"/></svg>
<div class="a" style="left:23.3px;top:267.95px;width:22.7px;height:14.5px;background:#fff repeating-conic-gradient(#d9d9d9 0 25%,#fff 0 50%) 0 0/4.500px 4.500px;border:1px solid #2a2a2a;box-shadow:0 0 0 .5px #777 inset"></div>
<div class="t" style="left:50.8px;top:271.25px;color:#f2f2f2;font-size:7.650px">Layer 3 copy 4</div>
<div class="t" style="left:179.8px;top:271.25px;font-family:'Liberation Serif',serif;font-style:italic;font-size:10.500px;color:#dcdcdc;letter-spacing:0">fx</div>
<div class="a" style="left:190px;top:267.05px;width:7.8px;height:18.4px;background:linear-gradient(#9a9a9a,#6e6e6e);border-radius:1px"></div>
<svg class="a" style="left:191.7px;top:274.25px;" width="4.5" height="4" viewBox="0 0 4.5 4"><path d="M.3 3.200h3.900l-1.950-2.700z" fill="#222"/></svg>
<svg class="a" style="left:33.8px;top:287.45px;" width="9.2" height="7.2" viewBox="0 0 9.2 7.2"><path d="M.2 3.600c1.800-4.200 7-4.200 8.800 0-1.800 4.200-7 4.200-8.800 0z" fill="#dedede"/><circle cx="4.800" cy="3.500" r="2" fill="#3a3a3a"/><circle cx="4" cy="2.700" r=".7" fill="#dedede"/></svg>
<div class="t" style="left:46.3px;top:286.15px;color:#ececec;font-size:7.650px">Effects</div>
<svg class="a" style="left:45.4px;top:300.85px;" width="9.2" height="7.2" viewBox="0 0 9.2 7.2"><path d="M.2 3.600c1.800-4.200 7-4.200 8.800 0-1.800 4.200-7 4.200-8.800 0z" fill="#dedede"/><circle cx="4.800" cy="3.500" r="2" fill="#3a3a3a"/><circle cx="4" cy="2.700" r=".7" fill="#dedede"/></svg>
<div class="t" style="left:58px;top:299.55px;color:#ececec;font-size:7.500px">Gradient Overlay</div>
<div class="a" style="left:0px;top:310.8px;width:201px;height:1px;background:#3f3f3f"></div>
<svg class="a" style="left:5.3px;top:316.8px;" width="9.2" height="7.2" viewBox="0 0 9.2 7.2"><path d="M.2 3.600c1.800-4.200 7-4.200 8.800 0-1.800 4.200-7 4.200-8.800 0z" fill="#dedede"/><circle cx="4.800" cy="3.500" r="2" fill="#3a3a3a"/><circle cx="4" cy="2.700" r=".7" fill="#dedede"/></svg>
<div class="a" style="left:23.3px;top:313.2px;width:22.7px;height:14.5px;background:#fff repeating-conic-gradient(#d9d9d9 0 25%,#fff 0 50%) 0 0/4.500px 4.500px;border:1px solid #2a2a2a;box-shadow:0 0 0 .5px #777 inset"></div>
<div class="t" style="left:50.8px;top:316.5px;color:#f2f2f2;font-size:7.650px">Layer 3 copy 2</div>
<div class="t" style="left:179.8px;top:316.5px;font-family:'Liberation Serif',serif;font-style:italic;font-size:10.500px;color:#dcdcdc;letter-spacing:0">fx</div>
<div class="a" style="left:190px;top:312.3px;width:7.8px;height:18.4px;background:linear-gradient(#9a9a9a,#6e6e6e);border-radius:1px"></div>
<svg class="a" style="left:191.7px;top:319.5px;" width="4.5" height="4" viewBox="0 0 4.5 4"><path d="M.3 3.200h3.900l-1.950-2.700z" fill="#222"/></svg>
<svg class="a" style="left:33.8px;top:332.7px;" width="9.2" height="7.2" viewBox="0 0 9.2 7.2"><path d="M.2 3.600c1.800-4.200 7-4.200 8.800 0-1.800 4.200-7 4.200-8.800 0z" fill="#dedede"/><circle cx="4.800" cy="3.500" r="2" fill="#3a3a3a"/><circle cx="4" cy="2.700" r=".7" fill="#dedede"/></svg>
<div class="t" style="left:46.3px;top:331.4px;color:#ececec;font-size:7.650px">Effects</div>
<svg class="a" style="left:45.4px;top:346.1px;" width="9.2" height="7.2" viewBox="0 0 9.2 7.2"><path d="M.2 3.600c1.800-4.200 7-4.200 8.800 0-1.800 4.200-7 4.200-8.800 0z" fill="#dedede"/><circle cx="4.800" cy="3.500" r="2" fill="#3a3a3a"/><circle cx="4" cy="2.700" r=".7" fill="#dedede"/></svg>
<div class="t" style="left:58px;top:344.8px;color:#ececec;font-size:7.500px">Gradient Overlay</div>
<div class="a" style="left:198.3px;top:0px;width:10.7px;height:356.0px;background:#434343"></div>
<div class="a" style="left:200.6px;top:110.19999999999999px;width:5.6px;height:204.5px;background:linear-gradient(90deg,#787878,#686868);border-radius:2.800px"></div>
</div>
<div class="a" style="left:808px;top:507.5px;width:208.8px;height:14.3px;background:#535353;border-top:1px solid #3a3a3a"></div>
<svg class="a" style="left:874px;top:511.5px;" width="12" height="7" viewBox="0 0 12 7"><rect x=".6" y="1.200" width="5.500" height="4" rx="2" fill="none" stroke="#a6a6a6" stroke-width="1"/><rect x="5.400" y="1.200" width="5.500" height="4" rx="2" fill="none" stroke="#a6a6a6" stroke-width="1"/></svg>
<div class="t" style="left:894.500px;top:509.500px;font-family:'Liberation Serif',serif;font-style:italic;font-size:10.500px;color:#c6c6c6;letter-spacing:-.3px">fx</div>
<div class="a" style="left:904.7px;top:517.5px;width:1.2px;height:1.2px;background:#c6c6c6"></div>
<svg class="a" style="left:912.5px;top:511.5px;" width="10" height="7.5" viewBox="0 0 10 7.5"><rect width="10" height="7.500" fill="#c6c6c6"/><circle cx="5" cy="3.750" r="2" fill="#3c3c3c"/></svg>
<svg class="a" style="left:932px;top:511px;" width="9" height="9" viewBox="0 0 9 9"><circle cx="4.500" cy="4.500" r="3.800" fill="#c6c6c6"/><path d="M1.800 7.200a3.800 3.800 0 0 0 5.400-5.400z" fill="#535353"/><circle cx="4.500" cy="4.500" r="3.800" fill="none" stroke="#c6c6c6" stroke-width=".8"/></svg>
<div class="a" style="left:942.3px;top:517.5px;width:1.2px;height:1.2px;background:#c6c6c6"></div>
<svg class="a" style="left:950px;top:511px;" width="10" height="8" viewBox="0 0 10 8"><path d="M0 1h3.500l1 1.200h5.500v5.800h-10z" fill="#c6c6c6"/></svg>
<svg class="a" style="left:969px;top:510.5px;" width="9" height="9" viewBox="0 0 9 9"><path d="M.5 .5h8v8h-3.500v-4.500h-4.500z" fill="#c6c6c6"/><path d="M1 5.500l3 3" stroke="#c6c6c6" stroke-width=".8"/></svg>
<svg class="a" style="left:987.5px;top:510px;" width="9" height="10" viewBox="0 0 9 10"><path d="M1.500 3h6l-.6 6.500h-4.800z" fill="#c6c6c6"/><path d="M.5 2h8M3.200 1h2.600" stroke="#c6c6c6" stroke-width="1"/><path d="M3.300 4v4.500M5.700 4v4.500" stroke="#535353" stroke-width=".7"/></svg>
</body></html>
